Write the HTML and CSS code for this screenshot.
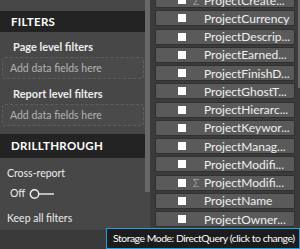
FILE: index.html
```html
<!DOCTYPE html>
<html lang="en">
<head>
  <meta charset="UTF-8" />
  <title>Filters</title>
  <link rel="stylesheet" href="styles.css">
</head>
<body>
  <div class="app">
    <div class="filters-pane">
      <div class="filters-scroll">
        <div class="pane-gap"></div>
        <div class="band">FILTERS</div>
        <div class="group-label">Page level filters</div>
        <div class="drop-box">Add data fields here</div>
        <div class="group-label">Report level filters</div>
        <div class="drop-box">Add data fields here</div>
        <div class="band band-drill">DRILLTHROUGH</div>
        <div class="plain-label">Cross-report</div>
        <div class="toggle">
          <span>Off</span>
          <svg width="26" height="12" viewBox="0 0 26 12">
            <circle cx="5.5" cy="6" r="4.2" fill="none" stroke="#f0f0f0" stroke-width="1.4"/>
            <line x1="9.7" y1="6" x2="25" y2="6" stroke="#f0f0f0" stroke-width="1.4"/>
          </svg>
        </div>
        <div class="plain-label keep">Keep all filters</div>
      </div>
      <div class="pane-scrollbar"></div>
    </div>
    <div class="fields-pane">
      <div class="field-list">
        <div class="field"><span class="box"></span><span class="sigma">&Sigma;</span>ProjectCreate...</div>
        <div class="field"><span class="box"></span><span class="sigma"></span>ProjectCurrency</div>
        <div class="field"><span class="box"></span><span class="sigma"></span>ProjectDescrip...</div>
        <div class="field"><span class="box"></span><span class="sigma"></span>ProjectEarned...</div>
        <div class="field"><span class="box"></span><span class="sigma"></span>ProjectFinishD...</div>
        <div class="field"><span class="box"></span><span class="sigma"></span>ProjectGhostT...</div>
        <div class="field"><span class="box"></span><span class="sigma"></span>ProjectHierarc...</div>
        <div class="field"><span class="box"></span><span class="sigma"></span>ProjectKeywor...</div>
        <div class="field"><span class="box"></span><span class="sigma"></span>ProjectManag...</div>
        <div class="field"><span class="box"></span><span class="sigma"></span>ProjectModifi...</div>
        <div class="field"><span class="box"></span><span class="sigma">&Sigma;</span>ProjectModifi...</div>
        <div class="field"><span class="box"></span><span class="sigma"></span>ProjectName</div>
        <div class="field"><span class="box"></span><span class="sigma"></span>ProjectOwner...</div>
      </div>
      <div class="list-scrollbar"><div class="thumb"></div></div>
    </div>
    <div class="storage-mode">Storage Mode: DirectQuery (click to change)</div>
  </div>
</body>
</html>
```
FILE: styles.css
```css
body {
  margin: 0;
  background: #3a3a3a;
  font-family: Lato, "Open Sans", sans-serif;
  color: #ececec;
}
.app {
  position: relative;
  width: 300px;
  height: 249px;
  overflow: hidden;
  display: flex;
  align-items: flex-start;
}
.filters-pane {
  width: 150px;
  height: 230px;
  display: flex;
  background: #474747;
}
.filters-scroll {
  width: 145px;
  display: flex;
  flex-direction: column;
}
.pane-gap {
  height: 11px;
  flex: none;
}
.band {
  height: 21px;
  flex: none;
  background: #232323;
  color: #ffffff;
  font-weight: 700;
  font-size: 11.5px;
  line-height: 21px;
  padding-left: 11px;
  letter-spacing: 0.3px;
}
.group-label {
  font-size: 11px;
  font-weight: 700;
  padding-left: 13px;
  height: 25px;
  line-height: 29px;
}
.drop-box {
  margin: 0 1px 0 2px;
  height: 20px;
  border: 1px dashed #5e5e5e;
  border-radius: 3px;
  font-size: 10.5px;
  line-height: 20px;
  padding-left: 7px;
  color: #b4b4b4;
  background: #4a4a4a;
}
.band-drill {
  margin-top: 8px;
  height: 24px;
  line-height: 24px;
}
.plain-label {
  font-size: 10.5px;
  padding-left: 7px;
  margin-top: 8px;
  line-height: 15px;
}
.toggle {
  display: flex;
  align-items: center;
  gap: 4px;
  padding-left: 10px;
  margin-top: 5px;
  font-size: 10.5px;
  line-height: 15px;
}
.keep {
  margin-top: 10px;
}
.pane-scrollbar {
  width: 5px;
  height: 192px;
  background: #686868;
}
.fields-pane {
  flex: 1;
  display: flex;
  background: #3b3b3b;
  padding-left: 4px;
  height: 249px;
}
.field-list {
  width: 140px;
  margin-left: 1px;
  margin-top: -8px;
  display: flex;
  flex-direction: column;
  gap: 2.25px;
}
.field {
  flex: none;
  height: 14px;
  display: flex;
  align-items: center;
  background: #5a5a5a;
  border: 1px solid #303030;
  border-radius: 2px;
  font-size: 12px;
  color: #f0f0f0;
}
.box {
  width: 8px;
  height: 8px;
  background: #ffffff;
  margin-left: 22px;
}
.sigma {
  width: 16px;
  margin-left: 2px;
  text-align: center;
  font-size: 11px;
  color: #9a9a9a;
}
.list-scrollbar {
  width: 4px;
  margin-left: 3px;
}
.list-scrollbar .thumb {
  height: 88px;
  background: #6a6a6a;
}
.storage-mode {
  position: absolute;
  left: 106px;
  top: 228px;
  width: 194px;
  height: 21px;
  box-sizing: border-box;
  border: 1px solid #1ba1e2;
  background: #1c1c1c;
  color: #ffffff;
  font-size: 10.4px;
  letter-spacing: -0.45px;
  line-height: 19px;
  padding-left: 6px;
  white-space: nowrap;
}
```
